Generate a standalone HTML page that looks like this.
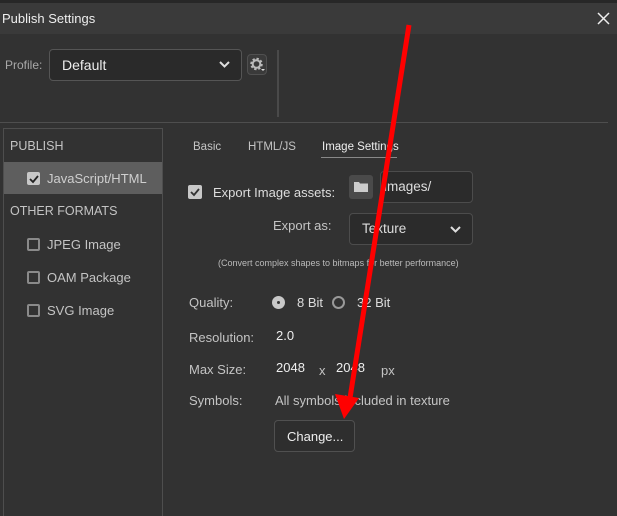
<!DOCTYPE html>
<html style="width:617px;height:516px;overflow:hidden"><head><style>
*{margin:0;padding:0;box-sizing:border-box}
body{width:617px;height:516px;background:#323232;font-family:"Liberation Sans",sans-serif;color:#ddd;position:relative;overflow:hidden;font-size:13px}
.a{position:absolute;white-space:nowrap;line-height:1}
.box{position:absolute;border:1px solid #4c4c4c;border-radius:4px;background:#2b2b2b}
.cb{position:absolute;width:13px;height:13px;border-radius:2px}
.cbon{background:#c8c8c8}
.cboff{border:2px solid #8a8a8a}
.lbl{color:#c4c4c4}
</style></head><body>
<div class="a" style="left:0;top:0;width:617px;height:3px;background:#272727"></div>
<div class="a" style="left:0;top:3px;width:617px;height:31px;background:#3a3a3a"></div>
<div class="a" style="left:2px;top:12px;font-size:13px;color:#eee">Publish Settings</div>
<svg class="a" style="left:597px;top:12px" width="13" height="13"><path d="M1 1L12 12M12 1L1 12" stroke="#eee" stroke-width="1.5"/></svg>

<div class="a" style="left:5px;top:59px;font-size:12px;color:#a8a8a8">Profile:</div>
<div class="box" style="left:49px;top:49px;width:193px;height:32px;background:#2a2a2a;border-color:#555"></div>
<div class="a" style="left:62px;top:58px;font-size:14px;color:#eee">Default</div>
<svg class="a" style="left:219px;top:61px" width="11" height="7"><path d="M1 1L5.5 5.5L10 1" stroke="#ddd" stroke-width="2" fill="none"/></svg>
<div class="box" style="left:247px;top:54px;width:20px;height:21px;background:#3a3a3a;border-color:#505050"></div>
<svg class="a" style="left:249px;top:56px" width="17" height="17"><circle cx="7.5" cy="8" r="5" fill="none" stroke="#bbb" stroke-width="2.5" stroke-dasharray="2.2 1.7"/><circle cx="7.5" cy="8" r="3.8" fill="none" stroke="#bbb" stroke-width="2"/><path d="M12 13h4l-2 2z" fill="#ddd"/></svg>
<div class="a" style="left:277px;top:50px;width:2px;height:67px;background:#4a4a4a"></div>
<div class="a" style="left:0;top:122px;width:608px;height:1px;background:#4e4e4e"></div>

<div class="a" style="left:3px;top:128px;width:160px;height:388px;border:1px solid #4e4e4e;border-bottom:none;background:#323232"></div>
<div class="a lbl" style="left:10px;top:140px;font-size:12.5px">PUBLISH</div>
<div class="a" style="left:4px;top:162px;width:158px;height:32px;background:#5e5e5e"></div>
<div class="cb cbon" style="left:27px;top:172px"></div>
<svg class="a" style="left:29px;top:174px" width="10" height="10"><path d="M1 5L4 8L9 2" stroke="#222" stroke-width="1.8" fill="none"/></svg>
<div class="a" style="left:47px;top:172px;color:#cfcfcf">JavaScript/HTML</div>
<div class="a lbl" style="left:10px;top:205px;font-size:12.5px">OTHER FORMATS</div>
<div class="cb cboff" style="left:27px;top:238px"></div>
<div class="a lbl" style="left:47px;top:238px">JPEG Image</div>
<div class="cb cboff" style="left:27px;top:271px"></div>
<div class="a lbl" style="left:47px;top:271px">OAM Package</div>
<div class="cb cboff" style="left:27px;top:304px"></div>
<div class="a lbl" style="left:47px;top:304px">SVG Image</div>

<div class="a lbl" style="left:193px;top:142px;font-size:11.5px">Basic</div>
<div class="a lbl" style="left:248px;top:142px;font-size:11.5px">HTML/JS</div>
<div class="a" style="left:322px;top:142px;font-size:11.5px;color:#eee">Image Settings</div>
<div class="a" style="left:321px;top:157px;width:76px;height:1px;background:#888"></div>

<div class="cb cbon" style="left:188px;top:185px;width:14px;height:14px"></div>
<svg class="a" style="left:190px;top:187px" width="10" height="10"><path d="M1 5L4 8L9 2" stroke="#333" stroke-width="1.8" fill="none"/></svg>
<div class="a" style="left:213px;top:186px;font-size:13px;color:#ddd">Export Image assets:</div>
<div class="a" style="left:349px;top:175px;width:24px;height:24px;background:#4a4a4a;border-radius:3px"></div>
<svg class="a" style="left:354px;top:180px" width="14" height="13"><path d="M0 2h5l1 1.5h8V12H0z" fill="#ccc"/></svg>
<div class="box" style="left:380px;top:171px;width:93px;height:32px"></div>
<div class="a" style="left:384px;top:180px;font-size:13.5px;color:#ddd">images/</div>
<div class="a lbl" style="left:273px;top:219px;font-size:13px">Export as:</div>
<div class="box" style="left:349px;top:213px;width:124px;height:32px"></div>
<div class="a" style="left:362px;top:222px;font-size:13.5px;color:#ddd">Texture</div>
<svg class="a" style="left:450px;top:226px" width="11" height="7"><path d="M1 1L5.5 5.5L10 1" stroke="#ddd" stroke-width="2" fill="none"/></svg>
<div class="a" style="left:218px;top:259px;font-size:9px;color:#bbb">(Convert complex shapes to bitmaps for better performance)</div>

<div class="a lbl" style="left:189px;top:296px">Quality:</div>
<div class="a" style="left:272px;top:296px;width:13px;height:13px;border-radius:50%;background:#c8c8c8"></div>
<div class="a" style="left:277px;top:301px;width:3px;height:3px;border-radius:50%;background:#333"></div>
<div class="a" style="left:297px;top:296px;color:#ddd">8 Bit</div>
<div class="a" style="left:332px;top:296px;width:13px;height:13px;border-radius:50%;border:2px solid #999"></div>
<div class="a" style="left:357px;top:296px;color:#ddd">32 Bit</div>
<div class="a lbl" style="left:189px;top:331px">Resolution:</div>
<div class="a" style="left:276px;top:329px;color:#eee">2.0</div>
<div class="a lbl" style="left:189px;top:363px">Max Size:</div>
<div class="a" style="left:276px;top:361px;color:#eee">2048</div>
<div class="a lbl" style="left:319px;top:364px">x</div>
<div class="a" style="left:336px;top:361px;color:#eee">2048</div>
<div class="a lbl" style="left:381px;top:364px">px</div>
<div class="a lbl" style="left:189px;top:394px">Symbols:</div>
<div class="a lbl" style="left:275px;top:394px">All symbols included in texture</div>
<div class="box" style="left:274px;top:420px;width:81px;height:32px;background:#2e2e2e;border-color:#505050"></div>
<div class="a" style="left:287px;top:430px;color:#eee">Change...</div>

<svg class="a" style="left:0;top:0" width="617" height="516"><path d="M409 25L350 398" stroke="#f00" stroke-width="5" fill="none"/><path d="M335 394L359 398L344 419z" fill="#f00"/></svg>
</body></html>
